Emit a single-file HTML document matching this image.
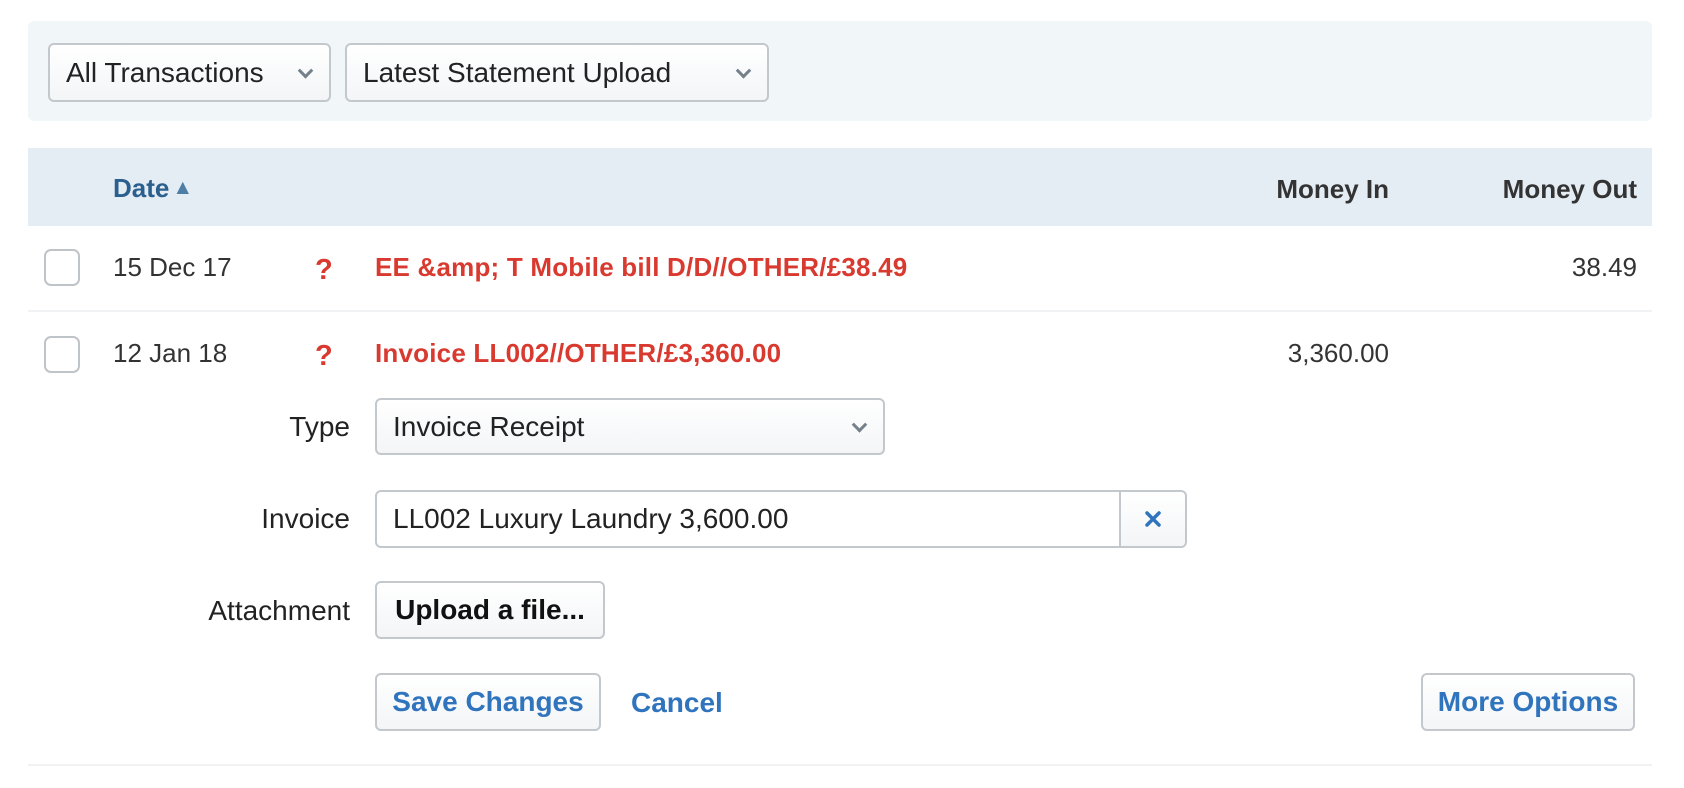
<!DOCTYPE html>
<html><head><meta charset="utf-8"><style>
*{box-sizing:border-box;margin:0;padding:0}
body{width:1684px;height:788px;background:#fff;font-family:"Liberation Sans",Arial,sans-serif;color:#222;font-size:26px;position:relative;overflow:hidden}
.a{position:absolute}
.panel{left:28px;top:21px;width:1624px;height:100px;background:#f1f6f9;border-radius:6px}
.sel{border:2px solid #c3c8cd;border-radius:6px;background:linear-gradient(#fff,#f3f5f7);display:flex;align-items:center;padding-left:16px;font-size:28px}
.chev{position:absolute;right:18px;top:50%;width:11px;height:11px;border-right:3px solid #75808a;border-bottom:3px solid #75808a;transform:translateY(-70%) rotate(45deg)}
.hdr{left:28px;top:148px;width:1624px;height:78px;background:#e5edf4}
.b{font-weight:bold}
.cb{width:36px;height:37px;border:2px solid #bfc4c9;border-radius:7px;background:#fff}
.red{color:#d93a30;font-weight:bold}
.line{height:2px;background:#f0f2f4;left:28px;width:1624px}
.btn{border:2px solid #c3c8cd;border-radius:6px;background:linear-gradient(#fff,#f3f5f7);display:flex;align-items:center;justify-content:center;font-weight:bold;font-size:28px}
.blue{color:#2f74bd;font-weight:bold}
.t{line-height:1;white-space:nowrap}
.lbl{font-size:28px}
</style></head><body>
<div class="a panel"></div>
<div class="a sel" style="left:48px;top:43px;width:283px;height:59px"><span class="t">All Transactions</span><i class="chev"></i></div>
<div class="a sel" style="left:345px;top:43px;width:424px;height:59px"><span class="t">Latest Statement Upload</span><i class="chev"></i></div>

<div class="a hdr"></div>
<div class="a t b" style="left:113px;top:175px;color:#2a5f8e">Date<span style="font-size:21px;position:relative;top:-3px;color:#4e7ea6;margin-left:3px">&#9650;</span></div>
<div class="a t b" style="right:295px;top:176px;color:#333">Money In</div>
<div class="a t b" style="right:47px;top:176px;color:#333">Money Out</div>

<div class="a cb" style="left:44px;top:249px"></div>
<div class="a t" style="left:113px;top:254px;color:#333">15 Dec 17</div>
<div class="a t red" style="left:315px;top:256px;font-size:29px">?</div>
<div class="a t red" style="left:375px;top:254px;letter-spacing:0.2px">EE &amp;amp; T Mobile bill D/D//OTHER/£38.49</div>
<div class="a t" style="right:47px;top:254px;color:#333">38.49</div>
<div class="a line" style="top:310px"></div>

<div class="a cb" style="left:44px;top:336px"></div>
<div class="a t" style="left:113px;top:340px;color:#333">12 Jan 18</div>
<div class="a t red" style="left:315px;top:342px;font-size:29px">?</div>
<div class="a t red" style="left:375px;top:340px;letter-spacing:0.2px">Invoice LL002//OTHER/£3,360.00</div>
<div class="a t" style="right:295px;top:340px;color:#333">3,360.00</div>

<div class="a t lbl" style="right:1334px;top:413px">Type</div>
<div class="a sel" style="left:375px;top:398px;width:510px;height:57px"><span class="t">Invoice Receipt</span><i class="chev"></i></div>

<div class="a t lbl" style="right:1334px;top:505px">Invoice</div>
<div class="a" style="left:375px;top:490px;width:812px;height:58px;border:2px solid #c3c8cd;border-radius:6px;background:#fff;display:flex;align-items:center;padding-left:16px;font-size:28px"><span class="t">LL002 Luxury Laundry 3,600.00</span>
<div style="position:absolute;right:0;top:0;width:66px;height:100%;border-left:2px solid #c3c8cd;background:linear-gradient(#fff,#f3f5f7);border-radius:0 5px 5px 0;display:flex;align-items:center;justify-content:center">
<svg width="18" height="18" viewBox="0 0 18 18"><path d="M3 3L15 15M15 3L3 15" stroke="#2f74bd" stroke-width="3.5" stroke-linecap="round"/></svg></div></div>

<div class="a t lbl" style="right:1334px;top:597px">Attachment</div>
<div class="a btn" style="left:375px;top:581px;width:230px;height:58px;color:#111"><span class="t">Upload a file...</span></div>

<div class="a btn blue" style="left:375px;top:673px;width:226px;height:58px"><span class="t">Save Changes</span></div>
<div class="a t blue" style="left:631px;top:689px;font-size:28px">Cancel</div>
<div class="a btn blue" style="left:1421px;top:673px;width:214px;height:58px"><span class="t">More Options</span></div>

<div class="a line" style="top:764px"></div>
</body></html>
